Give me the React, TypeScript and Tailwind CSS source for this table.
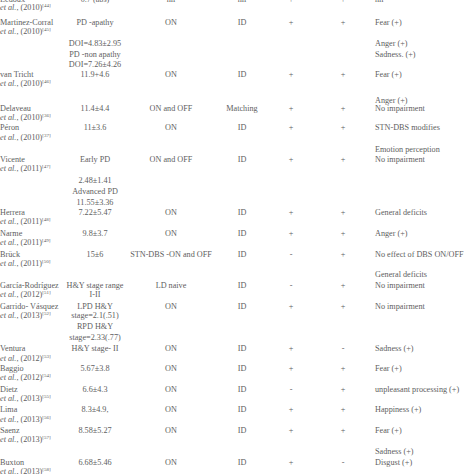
import React from 'react';

type Line = {
  h: string;
  c?: string[];
  etal?: [string, string];
};

// one entry per printed line of the table; h is the distance to the next line
const lines: Line[] = [
  { h: 'h-[8px]', c: ['Ledoux', '0.7 (abs)', 'nil', 'nil', '+', '+', 'nil'] },
  { h: 'h-[15px]', etal: ['2010', '44'] },
  { h: 'h-[9px]', c: ['Martinez-Corral', 'PD -apathy', 'ON', 'ID', '+', '+', 'Fear (+)'] },
  { h: 'h-[12px]', etal: ['2010', '45'] },
  { h: 'h-[11px]', c: ['', 'DOI=4.83±2.95', '', '', '', '', 'Anger (+)'] },
  { h: 'h-[10px]', c: ['', 'PD -non apathy', '', '', '', '', 'Sadness. (+)'] },
  { h: 'h-[10px]', c: ['', 'DOI=7.26±4.26', '', '', '', '', ''] },
  { h: 'h-[9px]', c: ['van Tricht', '11.9+4.6', 'ON', 'ID', '+', '+', 'Fear (+)'] },
  { h: 'h-[17px]', etal: ['2010', '46'] },
  { h: 'h-[8px]', c: ['', '', '', '', '', '', 'Anger (+)'] },
  { h: 'h-[9px]', c: ['Delaveau', '11.4±4.4', 'ON and OFF', 'Matching', '+', '+', 'No impairment'] },
  { h: 'h-[10px]', etal: ['2010', '36'] },
  { h: 'h-[10px]', c: ['Péron', '11±3.6', 'ON', 'ID', '+', '+', 'STN-DBS modifies'] },
  { h: 'h-[12px]', etal: ['2010', '37'] },
  { h: 'h-[10px]', c: ['', '', '', '', '', '', 'Emotion perception'] },
  { h: 'h-[9px]', c: ['Vicente', 'Early PD', 'ON and OFF', 'ID', '+', '+', 'No impairment'] },
  { h: 'h-[12px]', etal: ['2011', '47'] },
  { h: 'h-[11px]', c: ['', '2.48±1.41', '', '', '', '', ''] },
  { h: 'h-[11px]', c: ['', 'Advanced PD', '', '', '', '', ''] },
  { h: 'h-[10px]', c: ['', '11.55±3.36', '', '', '', '', ''] },
  { h: 'h-[9px]', c: ['Herrera', '7.22±5.47', 'ON', 'ID', '+', '+', 'General deficits'] },
  { h: 'h-[12px]', etal: ['2011', '48'] },
  { h: 'h-[9px]', c: ['Narme', '9.8±3.7', 'ON', 'ID', '+', '+', 'Anger (+)'] },
  { h: 'h-[12px]', etal: ['2011', '49'] },
  { h: 'h-[9px]', c: ['Brück', '15±6', 'STN-DBS -ON and OFF', 'ID', '-', '+', 'No effect of DBS ON/OFF'] },
  { h: 'h-[11px]', etal: ['2011', '50'] },
  { h: 'h-[11px]', c: ['', '', '', '', '', '', 'General deficits'] },
  { h: 'h-[9px]', c: ['García-Rodríguez', 'H&Y stage range', 'LD naive', 'ID', '-', '+', 'No impairment'] },
  { h: 'h-[12px]', etal: ['2012', '51'], c: ['', 'I-II', '', '', '', '', ''] },
  { h: 'h-[9px]', c: ['Garrido- Vásquez', 'LPD H&Y', 'ON', 'ID', '+', '+', 'No impairment'] },
  { h: 'h-[11px]', etal: ['2013', '52'], c: ['', 'stage=2.1(.51)', '', '', '', '', ''] },
  { h: 'h-[11px]', c: ['', 'RPD H&Y', '', '', '', '', ''] },
  { h: 'h-[11px]', c: ['', 'stage=2.33(.77)', '', '', '', '', ''] },
  { h: 'h-[10px]', c: ['Ventura', 'H&Y stage- II', 'ON', 'ID', '+', '-', 'Sadness (+)'] },
  { h: 'h-[10px]', etal: ['2012', '53'] },
  { h: 'h-[9px]', c: ['Baggio', '5.67±3.8', 'ON', 'ID', '+', '+', 'Fear (+)'] },
  { h: 'h-[12px]', etal: ['2012', '54'] },
  { h: 'h-[9px]', c: ['Dietz', '6.6±4.3', 'ON', 'ID', '-', '+', 'unpleasant processing (+)'] },
  { h: 'h-[11px]', etal: ['2013', '55'] },
  { h: 'h-[10px]', c: ['Lima', '8.3±4.9,', 'ON', 'ID', '+', '+', 'Happiness (+)'] },
  { h: 'h-[11px]', etal: ['2013', '56'] },
  { h: 'h-[9px]', c: ['Saenz', '8.58±5.27', 'ON', 'ID', '+', '+', 'Fear (+)'] },
  { h: 'h-[12px]', etal: ['2013', '57'] },
  { h: 'h-[11px]', c: ['', '', '', '', '', '', 'Sadness (+)'] },
  { h: 'h-[9px]', c: ['Buxton', '6.68±5.46', 'ON', 'ID', '+', '-', 'Disgust (+)'] },
  { h: 'h-[10px]', etal: ['2013', '58'] },
];

const EtAl: React.FC<{ year: string; refNo: string }> = ({ year, refNo }) => (
  <span>
    <i>et al.</i>, ({year})
    <span className="relative -top-[3px] text-[5px]">[{refNo}]</span>
  </span>
);

const App: React.FC = () => {
  return (
    <div className="w-[474px] h-[474px] overflow-hidden bg-white">
      <div className="-mt-[5px] -ml-[2px] w-[476px] font-['Liberation_Serif',serif] text-[8.2px] leading-[10px] text-[#5e5e5e]">
        {lines.map((line, i) => {
          const c = line.c ?? ['', '', '', '', '', '', ''];
          return (
            <div
              key={i}
              className={`grid grid-cols-[64px_66px_86px_56px_42px_62px_1fr] whitespace-nowrap ${line.h}`}
            >
              <div className="pl-[2px]">
                {line.etal ? <EtAl year={line.etal[0]} refNo={line.etal[1]} /> : c[0]}
              </div>
              <div className="text-center">{c[1]}</div>
              <div className="text-center">{c[2]}</div>
              <div className="text-center">{c[3]}</div>
              <div className="text-center">{c[4]}</div>
              <div className="text-center">{c[5]}</div>
              <div className="pl-[1px]">{c[6]}</div>
            </div>
          );
        })}
      </div>
    </div>
  );
};

export default App;
